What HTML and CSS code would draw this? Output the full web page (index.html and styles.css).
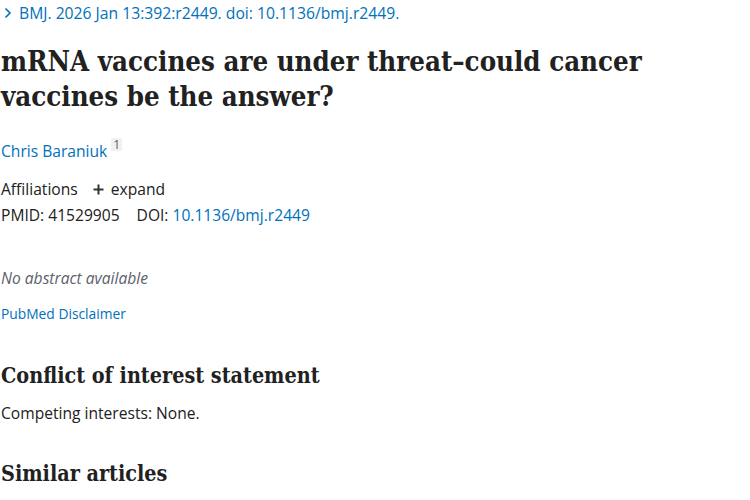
FILE: index.html
```html
<!DOCTYPE html>
<html lang="en">
<head>
    <meta charset="UTF-8">
    <meta name="viewport" content="width=device-width, initial-scale=1.0">
    <title>mRNA vaccines are under threat - PubMed</title>
    <link rel="stylesheet" href="styles.css">
</head>
<body>
    <main class="article">
        <div class="cit">
            <span class="chev"><svg width="10" height="12" viewBox="0 0 10 12"><path d="M2.5 1.5 L7 6 L2.5 10.5" fill="none" stroke="#0071bc" stroke-width="1.6"/></svg></span><a href="#" class="journal">BMJ.</a> 2026 Jan 13:392:r2449. doi: 10.1136/bmj.r2449.
        </div>

        <h1 class="heading-title">mRNA vaccines are under threat–could cancer vaccines be the answer?</h1>

        <div class="authors">
            <a href="#" class="author">Chris Baraniuk</a><sup class="aff-ref">1</sup>
        </div>

        <div class="affiliations">
            <span>Affiliations</span>
            <button class="expand"><span class="plus"><svg width="11" height="11" viewBox="0 0 11 11"><path d="M5.5 0.5 V10.5 M0.5 5.5 H10.5" stroke="#333" stroke-width="2"/></svg></span>expand</button>
        </div>

        <ul class="identifiers">
            <li>PMID: 41529905</li>
            <li>DOI: <a href="#">10.1136/bmj.r2449</a></li>
        </ul>

        <p class="empty-abstract">No abstract available</p>
        <a href="#" class="disclaimer">PubMed Disclaimer</a>

        <h2 class="section-title coi-title">Conflict of interest statement</h2>
        <p class="coi">Competing interests: None.</p>

        <h2 class="section-title similar-title">Similar articles</h2>
    </main>
</body>
</html>
```

FILE: styles.css
```css
body {
    margin: 0;
    font-family: "Open Sans", "Noto Sans", sans-serif;
    font-size: 15.6px;
    color: #212121;
    background: #fff;
}
a {
    color: #0071bc;
    text-decoration: none;
}
.article {
    padding: 0 1px;
}
.cit {
    color: #0071bc;
    font-size: 15.7px;
    line-height: 26px;
    white-space: nowrap;
}
.chev {
    display: inline-block;
    width: 16px;
    padding-left: 2px;
}
.heading-title {
    font-family: "DejaVu Serif Condensed", "DejaVu Serif", serif;
    font-weight: bold;
    font-size: 27.4px;
    line-height: 35px;
    margin: 18px 0 0;
    color: #212121;
}
.authors {
    margin-top: 27px;
    line-height: 20px;
}
.aff-ref {
    display: inline-block;
    background: #f1f1f1;
    color: #5b616b;
    font-size: 12px;
    line-height: 13px;
    padding: 0 2px;
    margin: -3px 0 0 4px;
    vertical-align: top;
}
.affiliations {
    margin-top: 17px;
    line-height: 22px;
}
.expand {
    border: none;
    background: none;
    font: inherit;
    color: #212121;
    padding: 0;
    margin-left: 11px;
}
.plus {
    display: inline-block;
    margin-right: 7px;
}
.identifiers {
    list-style: none;
    padding: 0;
    margin: 4px 0 0;
    display: flex;
    gap: 17px;
    line-height: 22px;
}
.empty-abstract {
    font-style: italic;
    color: #5b616b;
    margin: 41px 0 0;
    line-height: 22px;
}
.disclaimer {
    display: block;
    font-size: 13.8px;
    margin-top: 16px;
    line-height: 18px;
}
.section-title {
    font-family: "DejaVu Serif Condensed", "DejaVu Serif", serif;
    font-weight: bold;
    font-size: 21.4px;
    line-height: 28px;
    margin: 39px 0 0;
}
.similar-title {
    margin-top: 36px;
}
.coi {
    margin: 12px 0 0;
    line-height: 22px;
}
```
